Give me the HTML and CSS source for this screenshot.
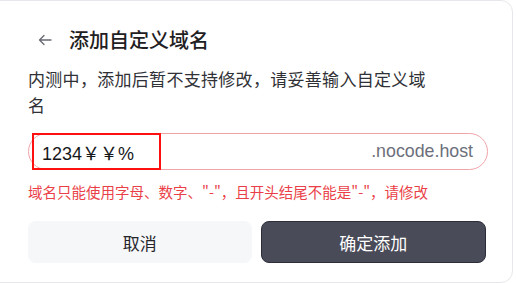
FILE: index.html
```html
<!DOCTYPE html>
<html lang="zh-CN">
<head>
    <meta charset="UTF-8">
    <meta name="viewport" content="width=device-width, initial-scale=1.0">
    <title>添加自定义域名</title>
    <link rel="stylesheet" href="styles.css">
</head>
<body>
    <div class="dialog">
        <div class="header">
            <span class="back">
                <svg width="14" height="12" viewBox="0 0 14 12" fill="none" stroke="#666a73" stroke-width="1.3" stroke-linecap="round" stroke-linejoin="round">
                    <path d="M13 6H1.5M6 1.5L1.5 6L6 10.5"/>
                </svg>
            </span>
            <h3 class="title">添加自定义域名</h3>
        </div>
        <p class="desc">内测中，添加后暂不支持修改，请妥善输入自定义域名</p>
        <div class="field">
            <span class="value">1234￥￥%</span>
            <span class="suffix">.nocode.host</span>
            <div class="mark"></div>
        </div>
        <p class="error">域名只能使用字母、数字、"-"，且开头结尾不能是"-"，请修改</p>
        <div class="actions">
            <button class="btn cancel">取消</button>
            <button class="btn ok">确定添加</button>
        </div>
    </div>
</body>
</html>
```

FILE: styles.css
```css
body {
    margin: 0;
    background: #ffffff;
    font-family: "Noto Sans CJK SC", "Noto Sans", sans-serif;
    overflow: hidden;
}
.dialog {
    box-sizing: border-box;
    width: 533px;
    height: 283px;
    margin-left: -20px;
    padding: 25px 26px 0 47px;
    background: #fff;
    border: 1px solid #e6e7ea;
    border-radius: 12px;
}
.header {
    display: flex;
    align-items: center;
    height: 28px;
}
.back {
    display: flex;
    width: 14px;
    margin-left: 10px;
    margin-right: 17px;
}
.title {
    margin: 0;
    font-size: 20px;
    font-weight: 500;
    line-height: 28px;
    color: #1f2023;
}
.desc {
    margin: 12px 0 0 0;
    max-width: 402px;
    font-size: 17px;
    line-height: 26px;
    letter-spacing: 0.3px;
    color: #303136;
}
.field {
    position: relative;
    display: flex;
    align-items: center;
    justify-content: space-between;
    box-sizing: border-box;
    height: 37px;
    margin-top: 15px;
    margin-right: -2px;
    padding: 0 14px 0 13px;
    border: 1px solid #f0a4aa;
    border-radius: 19px;
}
.value {
    font-family: "Liberation Sans", "Noto Sans CJK SC", sans-serif;
    font-size: 18px;
    color: #16171a;
}
.suffix {
    font-family: "Liberation Sans", "Noto Sans CJK SC", sans-serif;
    font-size: 17.8px;
    color: #6c6f7b;
}
.mark {
    position: absolute;
    left: 3px;
    top: -1px;
    width: 129px;
    height: 37px;
    box-sizing: border-box;
    border: 2px solid #ff1010;
}
.error {
    margin: 12px 0 0 0;
    font-size: 14.5px;
    line-height: 20px;
    color: #ea3f48;
}
.actions {
    display: flex;
    gap: 9px;
    margin-top: 19px;
}
.btn {
    flex: 1;
    height: 42px;
    border-radius: 8px;
    font-family: inherit;
    font-size: 17px;
    cursor: pointer;
}
.cancel {
    background: #f6f7f9;
    border: none;
    color: #25262b;
}
.ok {
    background: #4a4b58;
    border: 1px solid #2c2d3a;
    color: #ffffff;
}
```
